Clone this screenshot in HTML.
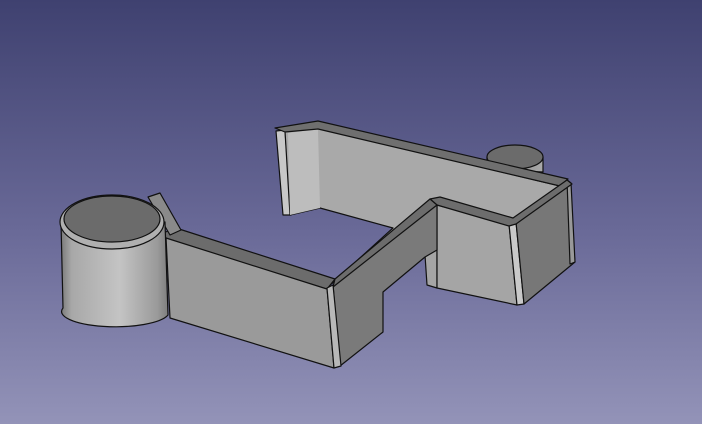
<!DOCTYPE html><html><head><style>html,body{margin:0;padding:0;width:702px;height:424px;overflow:hidden}html{background:#6a6a98}body{background:linear-gradient(#3f4170,#6a6a98 55%,#9393b8)}</style></head><body>
<svg width="702" height="424" viewBox="0 0 702 424" xmlns="http://www.w3.org/2000/svg" stroke="#111" stroke-width="1.2" stroke-linejoin="round" style="display:block">
<defs>
<linearGradient id="cyl" x1="0" x2="1"><stop offset="0" stop-color="#7a7a7a"/><stop offset="0.1" stop-color="#a8a8a8"/><stop offset="0.55" stop-color="#c4c4c4"/><stop offset="0.9" stop-color="#9a9a9a"/><stop offset="1" stop-color="#7e7e7e"/></linearGradient>
<linearGradient id="cyl2" x1="0" x2="1"><stop offset="0" stop-color="#777"/><stop offset="1" stop-color="#aaa"/></linearGradient>
</defs>
<path d="M487,157 L487,170 L543,172 L543,157 Z" fill="url(#cyl2)"/>
<ellipse cx="515" cy="157" rx="28" ry="12" fill="#6b6b6b"/>
<polygon points="276,131 285,130 291,215 283,215" fill="#c8c8c8"/>
<polygon points="285,131 318,128 560,186 513,221 437,205 330,285 393,228 320,208 290,215" fill="#a9a9a9"/>
<polygon points="288,133 318,129 320,208 290,215" fill="#bdbdbd" stroke="none"/>
<polygon points="275,128 318,121 568,179 560,186 318,129 285,132" fill="#6f6f6f"/>
<polygon points="425,255 437,250 437,288 427,285" fill="#a5a5a5"/>
<polygon points="437,205 509,224 517,305 437,288" fill="#a5a5a5"/>
<polygon points="509,224 516,222 524,304 517,305" fill="#c9c9c9"/>
<polygon points="516,222 567,184 575,262 524,304" fill="#777"/>
<polygon points="567,180 571,183 575,262 570,264" fill="#999"/>
<polygon points="430,199 440,197 513,218 567,180 572,184 516,224 509,226 437,205" fill="#6d6d6d"/>
<polygon points="333,285 432,202 437,206 437,250 425,257 383,292 383,332 340,366" fill="#7a7a7a"/>
<polygon points="166,237 327,288 334,368 170,318" fill="#9a9a9a"/>
<polygon points="163,233 176,228 335,279 327,289 166,238" fill="#6c6c6c"/>
<polygon points="335,279 430,199 437,205 333,287" fill="#6c6c6c"/>
<polygon points="327,288 333,285 341,366 334,368" fill="#b8b8b8"/>
<polygon points="148,197 160,193 181,230 170,235" fill="#8a8a8a"/>
<path d="M61,222 L63,308 A53,15 0 0 0 168,315 L165,222 Z" fill="url(#cyl)"/>
<ellipse cx="112" cy="222" rx="52" ry="27" fill="#b0b0b0"/>
<ellipse cx="112" cy="219" rx="48" ry="23" fill="#6b6b6b"/>
</svg>
</body></html>
